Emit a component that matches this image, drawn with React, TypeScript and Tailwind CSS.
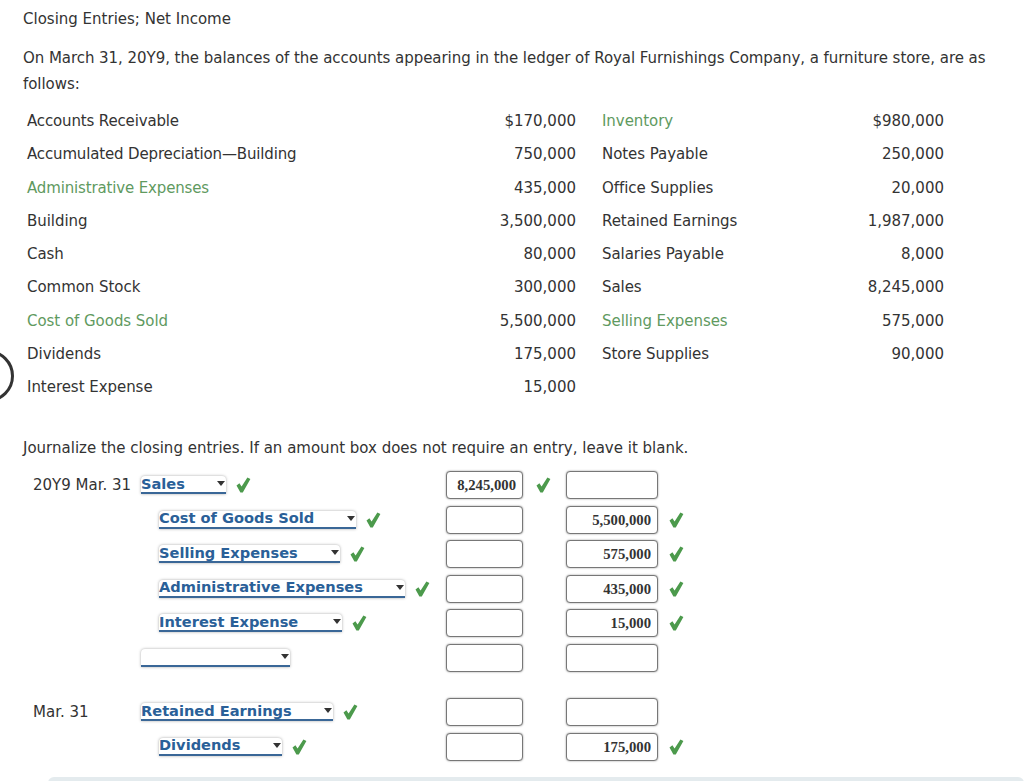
const ledger = [
  ["Accounts Receivable", "$170,000", "Inventory", "$980,000", "l2"],
  ["Accumulated Depreciation—Building", "750,000", "Notes Payable", "250,000", ""],
  ["Administrative Expenses", "435,000", "Office Supplies", "20,000", "l1"],
  ["Building", "3,500,000", "Retained Earnings", "1,987,000", ""],
  ["Cash", "80,000", "Salaries Payable", "8,000", ""],
  ["Common Stock", "300,000", "Sales", "8,245,000", ""],
  ["Cost of Goods Sold", "5,500,000", "Selling Expenses", "575,000", "both"],
  ["Dividends", "175,000", "Store Supplies", "90,000", ""],
  ["Interest Expense", "15,000", "", "", ""],
];

function Check() {
  return (
    <svg width="15" height="16" viewBox="0 0 15 16" className="shrink-0">
      <path d="M0.5 8.5 L3.4 6.2 L5.6 9.4 L11.4 0.4 L14.4 2 L6.8 15.4 L4.4 15.4 Z" fill="#4c9a4c" />
    </svg>
  );
}

function Select({ label, width }: { label: string; width: string }) {
  return (
    <div className={`${width} h-[18px] flex items-center justify-between bg-white border-b-2 border-[#3a6797] rounded-t-[4px] shadow-[0_0_3px_rgba(0,0,0,0.35)]`}>
      <span className="mb-[1px] font-bold text-[14.6px] leading-none text-[#2a6098] whitespace-nowrap">{label}</span>
      <span className="mr-[1px] mb-[1px] w-0 h-0 border-x-[4.5px] border-x-transparent border-t-[5px] border-t-[#333]" />
    </div>
  );
}

function Amount({ value, width }: { value?: string; width: string }) {
  return (
    <div className={`${width} h-[28px] flex items-center justify-end pr-[6px] bg-white border border-[#777] rounded-[4px] shadow-[0_0_2px_rgba(0,0,0,0.45)] font-['Liberation_Serif',serif] font-bold text-[14.7px] text-[#333]`}>
      {value}
    </div>
  );
}

function JournalRow({ date, indent, label, width, ok, debit, debitOk, credit, creditOk }: {
  date?: string; indent?: boolean; label: string; width: string; ok?: boolean;
  debit?: string; debitOk?: boolean; credit?: string; creditOk?: boolean;
}) {
  return (
    <div className="flex items-center h-[34.5px]">
      <div className="w-[118px] shrink-0 pl-[10px] whitespace-nowrap">{date}</div>
      <div className={`w-[305px] shrink-0 flex items-center gap-[10px] ${indent ? "pl-[18px]" : ""}`}>
        <Select label={label} width={width} />
        {ok && <Check />}
      </div>
      <div className="w-[120px] shrink-0 flex items-center gap-[13px]">
        <Amount value={debit} width="w-[77px]" />
        {debitOk && <Check />}
      </div>
      <div className="flex items-center gap-[11px]">
        <Amount value={credit} width="w-[92px]" />
        {creditOk && <Check />}
      </div>
    </div>
  );
}

export default function App() {
  return (
    <div className="relative w-[1024px] h-[781px] overflow-hidden bg-white font-['DejaVu_Sans',sans-serif] text-[15px] text-[#333]">
      <div className="absolute left-[-38px] top-[350px] w-[52px] h-[52px] rounded-full border-[3px] border-[#333]" />
      <div className="pl-[23px] pr-[30px] pt-[8px]">
        <p className="h-[22px] leading-[22px]">Closing Entries; Net Income</p>
        <p className="mt-[15px] leading-[26px] tracking-[-0.05px]">
          On March 31, 20Y9, the balances of the accounts appearing in the ledger of Royal Furnishings Company, a furniture store, are as follows:
        </p>
        <div className="mt-[7.7px] pl-[4px] grid grid-cols-[549px_368px]">
          {ledger.map((row, i) => (
            <div key={row[0]} className="contents">
              <div className="h-[33.25px] flex items-center justify-between">
                <span className={`${i < 3 ? "tracking-[-0.15px]" : "tracking-[-0.04px]"} ${row[4] === "l1" || row[4] === "both" ? "text-[#5f9a5f]" : ""}`}>{row[0]}</span>
                <span>{row[1]}</span>
              </div>
              <div className="h-[33.25px] flex items-center justify-between pl-[26px]">
                <span className={`tracking-[-0.06px] ${row[4] === "l2" || row[4] === "both" ? "text-[#5f9a5f]" : ""}`}>{row[2]}</span>
                <span>{row[3]}</span>
              </div>
            </div>
          ))}
        </div>
        <p className="mt-[33.3px] leading-[22px]">Journalize the closing entries. If an amount box does not require an entry, leave it blank.</p>
        <div className="mt-[9px]">
          <JournalRow date="20Y9 Mar. 31" label="Sales" width="w-[85px]" ok debit="8,245,000" debitOk />
          <JournalRow indent label="Cost of Goods Sold" width="w-[197px]" ok credit="5,500,000" creditOk />
          <JournalRow indent label="Selling Expenses" width="w-[181px]" ok credit="575,000" creditOk />
          <JournalRow indent label="Administrative Expenses" width="w-[246px]" ok credit="435,000" creditOk />
          <JournalRow indent label="Interest Expense" width="w-[183px]" ok credit="15,000" creditOk />
          <JournalRow label="" width="w-[149px]" />
          <div className="h-[20px]" />
          <JournalRow date="Mar. 31" label="Retained Earnings" width="w-[192px]" ok />
          <JournalRow indent label="Dividends" width="w-[123px]" ok credit="175,000" creditOk />
        </div>
      </div>
      <div className="absolute left-[48px] right-0 top-[777px] h-[10px] bg-[#e4ebee] rounded-t-[6px]" />
    </div>
  );
}
